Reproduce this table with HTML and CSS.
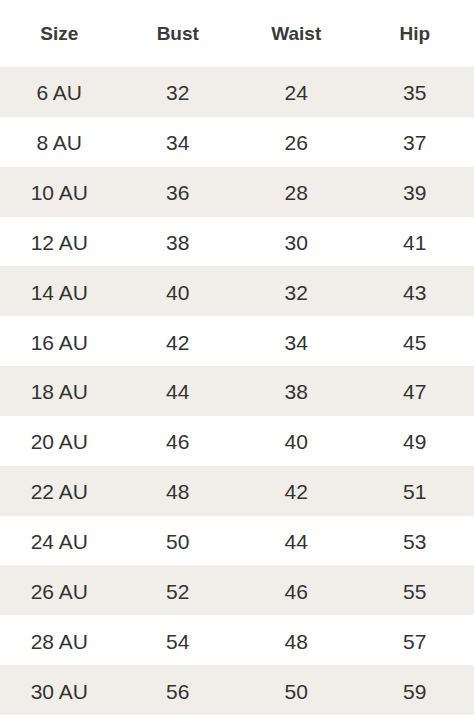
FILE: index.html
```html
<!DOCTYPE html>
<html lang="en">
<head>
<meta charset="utf-8">
<title>Size chart</title>
<link rel="stylesheet" href="styles.css">
</head>
<body>
<table class="chart">
  <thead>
    <tr class="head"><th>Size</th><th>Bust</th><th>Waist</th><th>Hip</th></tr>
  </thead>
  <tbody>
    <tr><td>6 AU</td><td>32</td><td>24</td><td>35</td></tr>
    <tr><td>8 AU</td><td>34</td><td>26</td><td>37</td></tr>
    <tr><td>10 AU</td><td>36</td><td>28</td><td>39</td></tr>
    <tr><td>12 AU</td><td>38</td><td>30</td><td>41</td></tr>
    <tr><td>14 AU</td><td>40</td><td>32</td><td>43</td></tr>
    <tr><td>16 AU</td><td>42</td><td>34</td><td>45</td></tr>
    <tr><td>18 AU</td><td>44</td><td>38</td><td>47</td></tr>
    <tr><td>20 AU</td><td>46</td><td>40</td><td>49</td></tr>
    <tr><td>22 AU</td><td>48</td><td>42</td><td>51</td></tr>
    <tr><td>24 AU</td><td>50</td><td>44</td><td>53</td></tr>
    <tr><td>26 AU</td><td>52</td><td>46</td><td>55</td></tr>
    <tr><td>28 AU</td><td>54</td><td>48</td><td>57</td></tr>
    <tr><td>30 AU</td><td>56</td><td>50</td><td>59</td></tr>
  </tbody>
</table>
</body>
</html>
```
FILE: styles.css
```css
html, body {
  margin: 0;
  padding: 0;
  background: #ffffff;
}
body {
  font-family: "Liberation Sans", Arial, sans-serif;
  color: #333333;
}
.chart {
  width: 474px;
  border-collapse: collapse;
  table-layout: fixed;
}
.chart th, .chart td {
  width: 25%;
  padding: 0;
  text-align: center;
  vertical-align: middle;
}
.chart th {
  height: 67px;
  font-size: 19px;
  font-weight: 700;
  color: #3a3a3a;
}
.chart td {
  box-sizing: border-box;
  height: 49.85px;
  padding-top: 3px;
  font-size: 21px;
  font-weight: 400;
}
.chart tbody tr:nth-child(odd) {
  background: #f1eeea;
}
```
